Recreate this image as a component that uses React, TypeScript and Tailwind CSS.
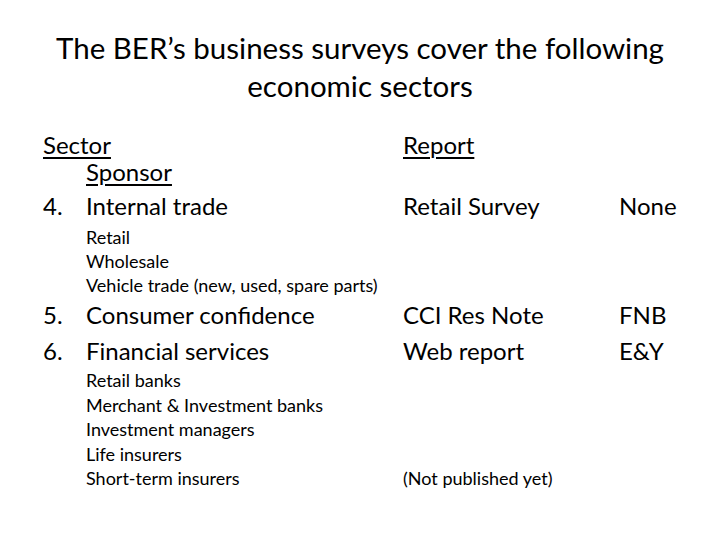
import React from "react";

type Row = {
  h: string;
  num?: string;
  lead?: string;
  text?: string;
  report?: string;
  sponsor?: string;
  small?: boolean;
  underline?: boolean;
  span?: boolean;
};

export default function App() {
  const rows: Row[] = [
    { h: "h-[24px]", lead: "Sector", report: "Report", underline: true, span: true },
    { h: "h-[30px]", text: "Sponsor", underline: true },
    { h: "h-[38px]", num: "4.", text: "Internal trade", report: "Retail Survey", sponsor: "None" },
    { h: "h-[24px]", text: "Retail", small: true },
    { h: "h-[24px]", text: "Wholesale", small: true },
    { h: "h-[24px]", text: "Vehicle trade (new, used, spare parts)", small: true },
    { h: "h-[36px]", num: "5.", text: "Consumer confidence", report: "CCI Res Note", sponsor: "FNB" },
    { h: "h-[35px]", num: "6.", text: "Financial services", report: "Web report", sponsor: "E&Y" },
    { h: "h-[24.5px]", text: "Retail banks", small: true },
    { h: "h-[24.5px]", text: "Merchant & Investment banks", small: true },
    { h: "h-[24.5px]", text: "Investment managers", small: true },
    { h: "h-[24.5px]", text: "Life insurers", small: true },
    { h: "h-[24.5px]", text: "Short-term insurers", small: true, report: "(Not published yet)" },
  ];

  const big = "text-[24px]";
  const small = "text-[18px]";

  return (
    <div
      className="w-[720px] h-[540px] bg-white text-black overflow-hidden"
      style={{ fontFamily: "Lato, 'Open Sans', sans-serif" }}
    >
      <div className="pt-[29px] text-center text-[29.5px] leading-[38px]">
        <div>The BER’s business surveys cover the following</div>
        <div>economic sectors</div>
      </div>
      <div className="mt-[28px] px-[43px]">
        {rows.map((r, i) => {
          const size = r.small ? small : big;
          return (
            <div key={i} className={`grid grid-cols-[43px_317px_216px_1fr] items-center ${r.h}`}>
              {r.span ? (
                <div className={`col-span-2 ${size} leading-none`}>
                  <span className="underline underline-offset-[3px] decoration-[1.5px]">{r.lead}</span>
                </div>
              ) : (
                <>
                  <div className={`${size} leading-none`}>{r.num ?? ""}</div>
                  <div className={`${size} leading-none whitespace-nowrap`}>
                    {r.underline ? (
                      <span className="underline underline-offset-[3px] decoration-[1.5px]">{r.text}</span>
                    ) : (
                      r.text
                    )}
                  </div>
                </>
              )}
              <div className={`${size} leading-none whitespace-nowrap`}>
                {r.underline && r.report ? (
                  <span className="underline underline-offset-[3px] decoration-[1.5px]">{r.report}</span>
                ) : (
                  r.report ?? ""
                )}
              </div>
              <div className={`${big} leading-none whitespace-nowrap`}>{r.sponsor ?? ""}</div>
            </div>
          );
        })}
      </div>
    </div>
  );
}
